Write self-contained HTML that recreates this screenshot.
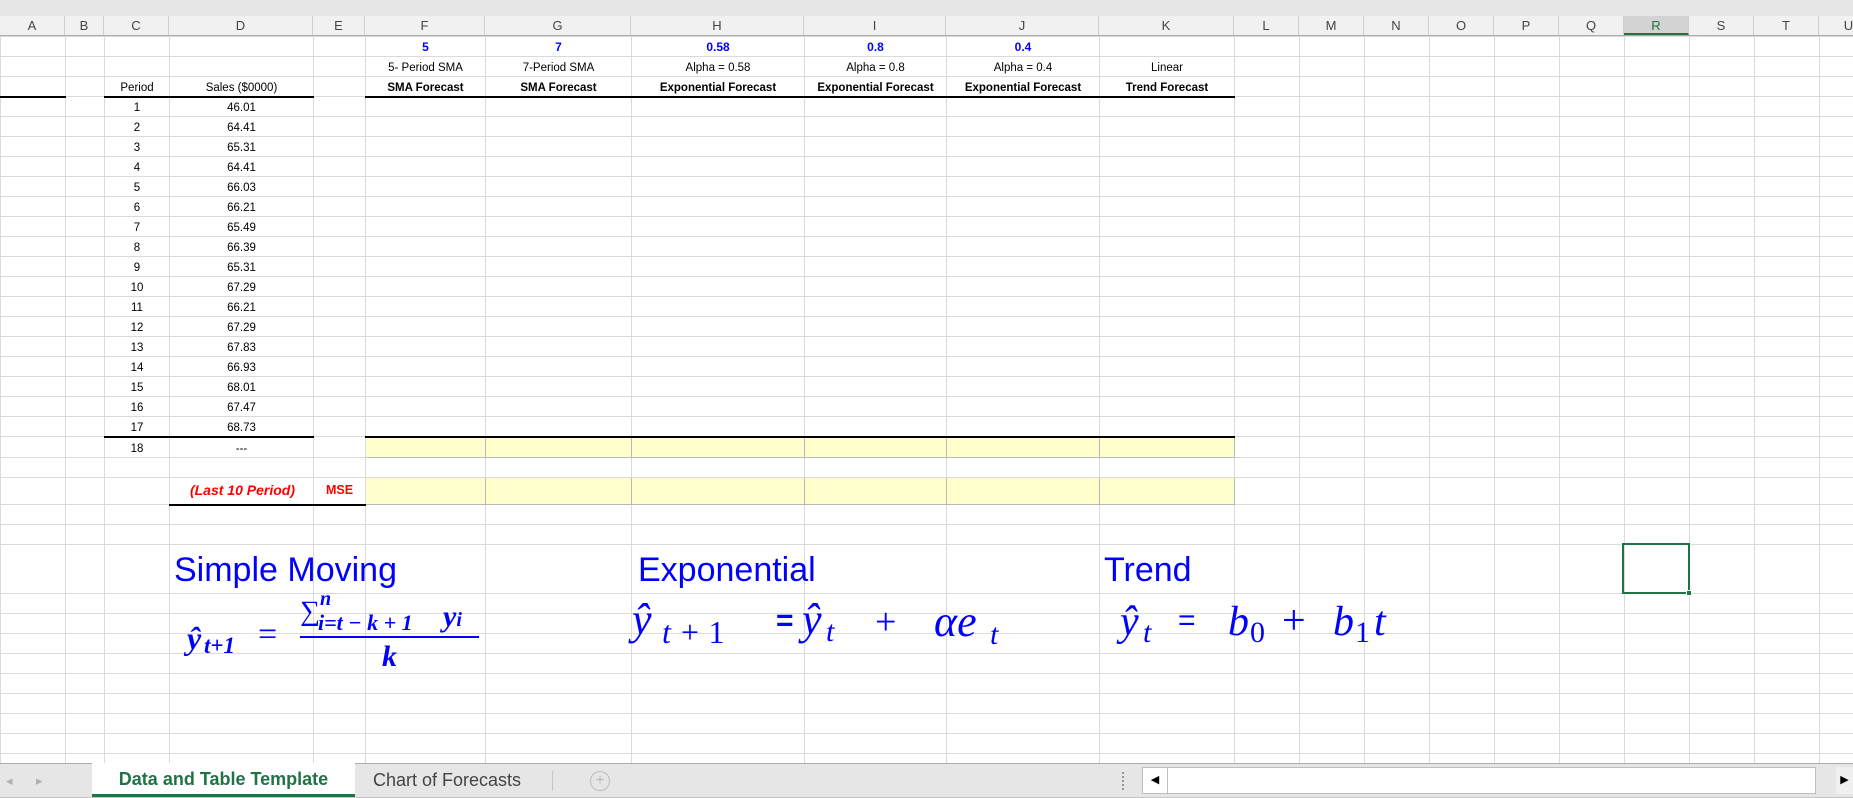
<!DOCTYPE html>
<html><head><meta charset="utf-8"><style>
*{margin:0;padding:0;box-sizing:border-box}
body{width:1853px;height:798px;overflow:hidden;background:#fff;font-family:"Liberation Sans",sans-serif;position:relative}
.top{position:absolute;left:0;top:0;width:1853px;height:16px;background:#e6e6e6}
.hdr{position:absolute;left:0;top:16px;height:20px;display:flex;background:#f1f1f1;border-bottom:1px solid #ababab;width:1900px}
.hdr div{height:19px;border-right:1px solid #cfcfcf;text-align:center;font-size:13px;color:#444;line-height:19px;flex:none}
.hdr div.sel{background:#d3d3d3;color:#217346;border-bottom:2px solid #217346}
.grid{position:absolute;left:0;top:36px;width:1900px;height:727px;overflow:hidden}
table{border-collapse:collapse;table-layout:fixed;width:1879px}
td{border:1px solid #dadada;font-size:11.5px;text-align:center;vertical-align:bottom;padding:0 0 2px 0;white-space:nowrap;overflow:visible;color:#000}
td.b{font-weight:bold}
td.blue{color:#00f;font-weight:bold;font-size:12px}
td.tb{border-bottom:2px solid #000}
td.tt{border-top:2px solid #000}
td.y{background:#ffffcc;border:1px solid #b8b8b8}
td.red{color:#f00;font-weight:bold}
.f{position:absolute;color:#00f;white-space:nowrap;line-height:1}
.s{font-family:"Liberation Sans",sans-serif}
.m{font-family:"Liberation Serif",serif;font-style:italic}
.tabbar{position:absolute;left:0;top:763px;width:1853px;height:35px;background:#e6e6e6;border-top:1px solid #ababab;border-bottom:1px solid #c6c6c6}
.tab1{position:absolute;left:92px;top:-1px;width:263px;height:34px;background:#fff;border-bottom:3px solid #217346;color:#217346;font-weight:bold;font-size:18px;line-height:32px;text-align:center}
.tab2{position:absolute;left:373px;top:0;font-size:18px;line-height:32px;color:#444}
</style></head><body>
<div class="top"></div>
<div class="hdr">
<div style="width:65px">A</div><div style="width:39px">B</div><div style="width:65px">C</div><div style="width:144px">D</div><div style="width:52px">E</div><div style="width:120px">F</div><div style="width:146px">G</div><div style="width:173px">H</div><div style="width:142px">I</div><div style="width:153px">J</div><div style="width:135px">K</div><div style="width:65px">L</div><div style="width:65px">M</div><div style="width:65px">N</div><div style="width:65px">O</div><div style="width:65px">P</div><div style="width:65px">Q</div><div class="sel" style="width:65px">R</div><div style="width:65px">S</div><div style="width:65px">T</div><div style="width:60px">U</div>
</div>
<div class="grid"><table>
<colgroup><col style="width:65px"><col style="width:39px"><col style="width:65px"><col style="width:144px"><col style="width:52px"><col style="width:120px"><col style="width:146px"><col style="width:173px"><col style="width:142px"><col style="width:153px"><col style="width:135px"><col style="width:65px"><col style="width:65px"><col style="width:65px"><col style="width:65px"><col style="width:65px"><col style="width:65px"><col style="width:65px"><col style="width:65px"><col style="width:65px"><col style="width:60px"></colgroup>
<tr style="height:20px"><td></td><td></td><td></td><td></td><td></td><td class="blue">5</td><td class="blue">7</td><td class="blue">0.58</td><td class="blue">0.8</td><td class="blue">0.4</td><td></td><td></td><td></td><td></td><td></td><td></td><td></td><td></td><td></td><td></td><td></td></tr>
<tr style="height:20px"><td></td><td></td><td></td><td></td><td></td><td>5- Period SMA</td><td>7-Period SMA</td><td>Alpha = 0.58</td><td>Alpha = 0.8</td><td>Alpha = 0.4</td><td>Linear</td><td></td><td></td><td></td><td></td><td></td><td></td><td></td><td></td><td></td><td></td></tr>
<tr style="height:20px"><td class="tb"></td><td></td><td class="tb">Period</td><td class="tb">Sales ($0000)</td><td></td><td class="tb b">SMA Forecast</td><td class="tb b">SMA Forecast</td><td class="tb b">Exponential Forecast</td><td class="tb b">Exponential Forecast</td><td class="tb b">Exponential Forecast</td><td class="tb b">Trend Forecast</td><td></td><td></td><td></td><td></td><td></td><td></td><td></td><td></td><td></td><td></td></tr>
<tr style="height:20px"><td></td><td></td><td>1</td><td>46.01</td><td></td><td></td><td></td><td></td><td></td><td></td><td></td><td></td><td></td><td></td><td></td><td></td><td></td><td></td><td></td><td></td><td></td></tr>
<tr style="height:20px"><td></td><td></td><td>2</td><td>64.41</td><td></td><td></td><td></td><td></td><td></td><td></td><td></td><td></td><td></td><td></td><td></td><td></td><td></td><td></td><td></td><td></td><td></td></tr>
<tr style="height:20px"><td></td><td></td><td>3</td><td>65.31</td><td></td><td></td><td></td><td></td><td></td><td></td><td></td><td></td><td></td><td></td><td></td><td></td><td></td><td></td><td></td><td></td><td></td></tr>
<tr style="height:20px"><td></td><td></td><td>4</td><td>64.41</td><td></td><td></td><td></td><td></td><td></td><td></td><td></td><td></td><td></td><td></td><td></td><td></td><td></td><td></td><td></td><td></td><td></td></tr>
<tr style="height:20px"><td></td><td></td><td>5</td><td>66.03</td><td></td><td></td><td></td><td></td><td></td><td></td><td></td><td></td><td></td><td></td><td></td><td></td><td></td><td></td><td></td><td></td><td></td></tr>
<tr style="height:20px"><td></td><td></td><td>6</td><td>66.21</td><td></td><td></td><td></td><td></td><td></td><td></td><td></td><td></td><td></td><td></td><td></td><td></td><td></td><td></td><td></td><td></td><td></td></tr>
<tr style="height:20px"><td></td><td></td><td>7</td><td>65.49</td><td></td><td></td><td></td><td></td><td></td><td></td><td></td><td></td><td></td><td></td><td></td><td></td><td></td><td></td><td></td><td></td><td></td></tr>
<tr style="height:20px"><td></td><td></td><td>8</td><td>66.39</td><td></td><td></td><td></td><td></td><td></td><td></td><td></td><td></td><td></td><td></td><td></td><td></td><td></td><td></td><td></td><td></td><td></td></tr>
<tr style="height:20px"><td></td><td></td><td>9</td><td>65.31</td><td></td><td></td><td></td><td></td><td></td><td></td><td></td><td></td><td></td><td></td><td></td><td></td><td></td><td></td><td></td><td></td><td></td></tr>
<tr style="height:20px"><td></td><td></td><td>10</td><td>67.29</td><td></td><td></td><td></td><td></td><td></td><td></td><td></td><td></td><td></td><td></td><td></td><td></td><td></td><td></td><td></td><td></td><td></td></tr>
<tr style="height:20px"><td></td><td></td><td>11</td><td>66.21</td><td></td><td></td><td></td><td></td><td></td><td></td><td></td><td></td><td></td><td></td><td></td><td></td><td></td><td></td><td></td><td></td><td></td></tr>
<tr style="height:20px"><td></td><td></td><td>12</td><td>67.29</td><td></td><td></td><td></td><td></td><td></td><td></td><td></td><td></td><td></td><td></td><td></td><td></td><td></td><td></td><td></td><td></td><td></td></tr>
<tr style="height:20px"><td></td><td></td><td>13</td><td>67.83</td><td></td><td></td><td></td><td></td><td></td><td></td><td></td><td></td><td></td><td></td><td></td><td></td><td></td><td></td><td></td><td></td><td></td></tr>
<tr style="height:20px"><td></td><td></td><td>14</td><td>66.93</td><td></td><td></td><td></td><td></td><td></td><td></td><td></td><td></td><td></td><td></td><td></td><td></td><td></td><td></td><td></td><td></td><td></td></tr>
<tr style="height:20px"><td></td><td></td><td>15</td><td>68.01</td><td></td><td></td><td></td><td></td><td></td><td></td><td></td><td></td><td></td><td></td><td></td><td></td><td></td><td></td><td></td><td></td><td></td></tr>
<tr style="height:20px"><td></td><td></td><td>16</td><td>67.47</td><td></td><td></td><td></td><td></td><td></td><td></td><td></td><td></td><td></td><td></td><td></td><td></td><td></td><td></td><td></td><td></td><td></td></tr>
<tr style="height:20px"><td></td><td></td><td class="tb">17</td><td class="tb">68.73</td><td></td><td class="tb"></td><td class="tb"></td><td class="tb"></td><td class="tb"></td><td class="tb"></td><td class="tb"></td><td></td><td></td><td></td><td></td><td></td><td></td><td></td><td></td><td></td><td></td></tr>
<tr style="height:21px"><td></td><td></td><td>18</td><td>---</td><td></td><td class="y tt"></td><td class="y tt"></td><td class="y tt"></td><td class="y tt"></td><td class="y tt"></td><td class="y tt"></td><td></td><td></td><td></td><td></td><td></td><td></td><td></td><td></td><td></td><td></td></tr>
<tr style="height:20px"><td></td><td></td><td></td><td></td><td></td><td></td><td></td><td></td><td></td><td></td><td></td><td></td><td></td><td></td><td></td><td></td><td></td><td></td><td></td><td></td><td></td></tr>
<tr style="height:27px"><td></td><td></td><td></td><td class="tb red" style="text-align:right;padding-right:18px;font-style:italic;font-size:14px;vertical-align:middle">(Last 10 Period)</td><td class="tb red" style="font-size:12.5px;vertical-align:middle">MSE</td><td class="y"></td><td class="y"></td><td class="y"></td><td class="y"></td><td class="y"></td><td class="y"></td><td></td><td></td><td></td><td></td><td></td><td></td><td></td><td></td><td></td><td></td></tr>
<tr style="height:20px"><td></td><td></td><td></td><td></td><td></td><td></td><td></td><td></td><td></td><td></td><td></td><td></td><td></td><td></td><td></td><td></td><td></td><td></td><td></td><td></td><td></td></tr>
<tr style="height:20px"><td></td><td></td><td></td><td></td><td></td><td></td><td></td><td></td><td></td><td></td><td></td><td></td><td></td><td></td><td></td><td></td><td></td><td></td><td></td><td></td><td></td></tr>
<tr style="height:49px"><td></td><td></td><td></td><td></td><td></td><td></td><td></td><td></td><td></td><td></td><td></td><td></td><td></td><td></td><td></td><td></td><td></td><td></td><td></td><td></td><td></td></tr>
<tr style="height:20px"><td></td><td></td><td></td><td></td><td></td><td></td><td></td><td></td><td></td><td></td><td></td><td></td><td></td><td></td><td></td><td></td><td></td><td></td><td></td><td></td><td></td></tr>
<tr style="height:20px"><td></td><td></td><td></td><td></td><td></td><td></td><td></td><td></td><td></td><td></td><td></td><td></td><td></td><td></td><td></td><td></td><td></td><td></td><td></td><td></td><td></td></tr>
<tr style="height:20px"><td></td><td></td><td></td><td></td><td></td><td></td><td></td><td></td><td></td><td></td><td></td><td></td><td></td><td></td><td></td><td></td><td></td><td></td><td></td><td></td><td></td></tr>
<tr style="height:20px"><td></td><td></td><td></td><td></td><td></td><td></td><td></td><td></td><td></td><td></td><td></td><td></td><td></td><td></td><td></td><td></td><td></td><td></td><td></td><td></td><td></td></tr>
<tr style="height:20px"><td></td><td></td><td></td><td></td><td></td><td></td><td></td><td></td><td></td><td></td><td></td><td></td><td></td><td></td><td></td><td></td><td></td><td></td><td></td><td></td><td></td></tr>
<tr style="height:20px"><td></td><td></td><td></td><td></td><td></td><td></td><td></td><td></td><td></td><td></td><td></td><td></td><td></td><td></td><td></td><td></td><td></td><td></td><td></td><td></td><td></td></tr>
<tr style="height:20px"><td></td><td></td><td></td><td></td><td></td><td></td><td></td><td></td><td></td><td></td><td></td><td></td><td></td><td></td><td></td><td></td><td></td><td></td><td></td><td></td><td></td></tr>
<tr style="height:20px"><td></td><td></td><td></td><td></td><td></td><td></td><td></td><td></td><td></td><td></td><td></td><td></td><td></td><td></td><td></td><td></td><td></td><td></td><td></td><td></td><td></td></tr>
<tr style="height:20px"><td></td><td></td><td></td><td></td><td></td><td></td><td></td><td></td><td></td><td></td><td></td><td></td><td></td><td></td><td></td><td></td><td></td><td></td><td></td><td></td><td></td></tr>
</table></div>

<div class="f s" style="left:174px;top:553px;font-size:34px">Simple Moving</div>
<div class="f s" style="left:638px;top:553px;font-size:34px">Exponential</div>
<div class="f s" style="left:1104px;top:553px;font-size:34px">Trend</div>

<!-- simple moving formula -->
<div class="f m" style="left:187px;top:622px;font-size:32px;font-weight:bold">ŷ</div>
<div class="f m" style="left:204px;top:634px;font-size:23px;font-weight:bold">t+1</div>
<div class="f" style="left:258px;top:618px;font-size:34px;font-family:'Liberation Serif',serif">=</div>
<div class="f" style="left:300px;top:598px;font-size:28px;font-family:'Liberation Serif',serif">∑</div>
<div class="f m" style="left:320px;top:589px;font-size:20px;font-weight:bold">n</div>
<div class="f m" style="left:318px;top:612px;font-size:22px;font-weight:bold">i=t − k + 1</div>
<div class="f m" style="left:443px;top:602px;font-size:30px;font-weight:bold">y<span style="font-size:20px">i</span></div>
<div style="position:absolute;left:300px;top:636px;width:179px;height:2px;background:#00f"></div>
<div class="f m" style="left:382px;top:642px;font-size:30px;font-weight:bold">k</div>

<!-- exponential formula -->
<div class="f m" style="left:632px;top:598px;font-size:44px">ŷ</div>
<div class="f m" style="left:662px;top:616px;font-size:32px">t + <span style="font-style:normal">1</span></div>
<div class="f s" style="left:776px;top:606px;font-size:30px;font-weight:bold">=</div>
<div class="f m" style="left:802px;top:598px;font-size:44px">ŷ</div>
<div class="f m" style="left:826px;top:617px;font-size:30px">t</div>
<div class="f" style="left:875px;top:603px;font-size:38px;font-family:'Liberation Serif',serif">+</div>
<div class="f m" style="left:934px;top:600px;font-size:44px">αe</div>
<div class="f m" style="left:990px;top:620px;font-size:30px">t</div>

<!-- trend formula -->
<div class="f m" style="left:1120px;top:601px;font-size:42px">ŷ</div>
<div class="f m" style="left:1143px;top:618px;font-size:30px">t</div>
<div class="f s" style="left:1178px;top:606px;font-size:30px">=</div>
<div class="f m" style="left:1228px;top:601px;font-size:42px">b</div>
<div class="f" style="left:1250px;top:618px;font-size:30px;font-family:'Liberation Serif',serif">0</div>
<div class="f" style="left:1282px;top:600px;font-size:42px;font-family:'Liberation Serif',serif">+</div>
<div class="f m" style="left:1333px;top:601px;font-size:42px">b</div>
<div class="f" style="left:1355px;top:618px;font-size:30px;font-family:'Liberation Serif',serif">1</div>
<div class="f m" style="left:1374px;top:601px;font-size:42px">t</div>

<div style="position:absolute;left:1622px;top:543px;width:68px;height:51px;border:2px solid #217346"></div>
<div style="position:absolute;left:1686px;top:590px;width:6px;height:6px;background:#217346;border:1px solid #fff"></div>

<div class="tabbar">
<div style="position:absolute;left:6px;top:9px;font-size:13px;color:#b0b0b0">◂</div>
<div style="position:absolute;left:36px;top:9px;font-size:13px;color:#b0b0b0">▸</div>
<div class="tab1">Data and Table Template</div>
<div class="tab2">Chart of Forecasts</div>
<div style="position:absolute;left:552px;top:7px;width:1px;height:20px;background:#c6c6c6"></div>
<div style="position:absolute;left:590px;top:7px;width:20px;height:20px;border:1px solid #bdbdbd;border-radius:50%;color:#bdbdbd;font-size:16px;line-height:17px;text-align:center">+</div>
<div style="position:absolute;left:1122px;top:8px;width:2px;height:18px;border-left:2px dotted #9a9a9a"></div>
<div style="position:absolute;left:1142px;top:3px;width:674px;height:27px;background:#fff;border:1px solid #bdbdbd"></div>
<div style="position:absolute;left:1142px;top:3px;width:26px;height:27px;border:1px solid #bdbdbd;background:#fff;font-size:11px;line-height:25px;text-align:center">◀</div>
<div style="position:absolute;left:1836px;top:3px;width:17px;height:27px;background:#f0f0f0;font-size:11px;line-height:27px;text-align:center">▶</div>
</div>
</body></html>
